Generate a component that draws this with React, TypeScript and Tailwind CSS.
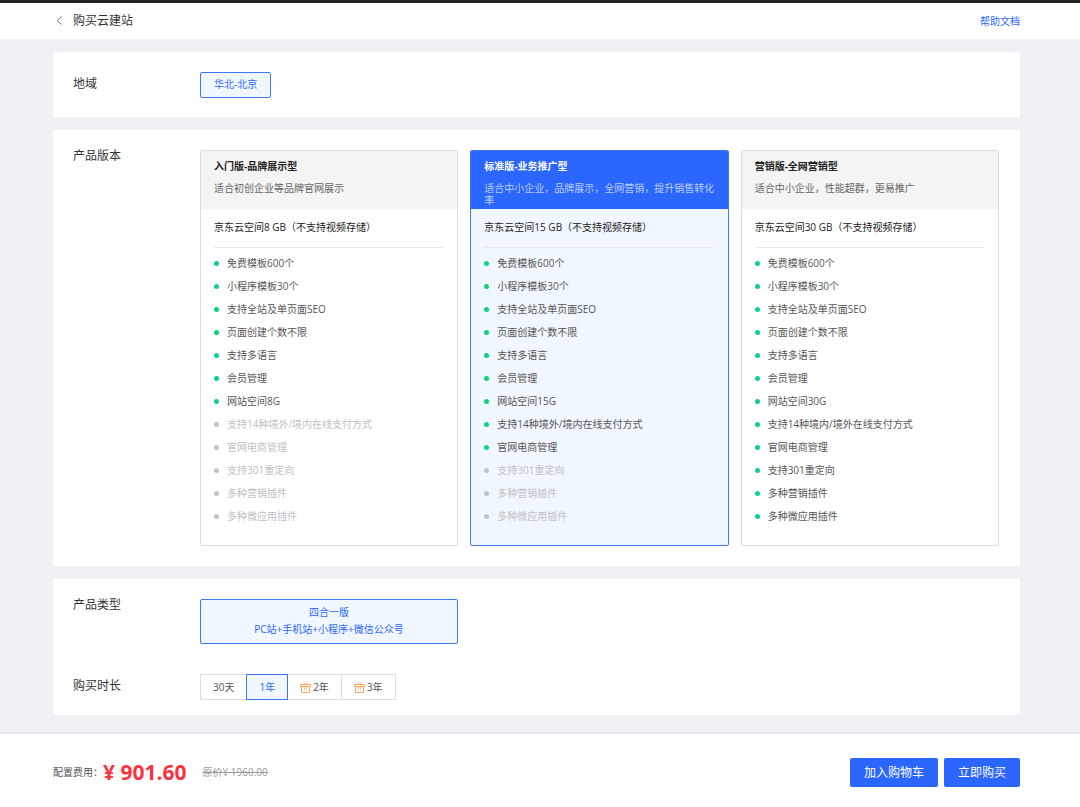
import { useState } from 'react';
import clsx from 'clsx';

const features = [
  '免费模板600个',
  '小程序模板30个',
  '支持全站及单页面SEO',
  '页面创建个数不限',
  '支持多语言',
  '会员管理',
];

const plans = [
  {
    id: 'starter',
    name: '入门版-品牌展示型',
    desc: '适合初创企业等品牌官网展示',
    space: '京东云空间8 GB（不支持视频存储）',
    items: [...features, '网站空间8G', '支持14种境外/境内在线支付方式', '官网电商管理', '支持301重定向', '多种营销插件', '多种微应用插件'],
    enabled: 7,
  },
  {
    id: 'standard',
    name: '标准版-业务推广型',
    desc: '适合中小企业，品牌展示，全网营销，提升销售转化率',
    space: '京东云空间15 GB（不支持视频存储）',
    items: [...features, '网站空间15G', '支持14种境外/境内在线支付方式', '官网电商管理', '支持301重定向', '多种营销插件', '多种微应用插件'],
    enabled: 9,
  },
  {
    id: 'marketing',
    name: '营销版-全网营销型',
    desc: '适合中小企业，性能超群，更易推广',
    space: '京东云空间30 GB（不支持视频存储）',
    items: [...features, '网站空间30G', '支持14种境内/境外在线支付方式', '官网电商管理', '支持301重定向', '多种营销插件', '多种微应用插件'],
    enabled: 12,
  },
];

const durations = [
  { label: '30天', gift: false },
  { label: '1年', gift: false },
  { label: '2年', gift: true },
  { label: '3年', gift: true },
];

function GiftIcon() {
  return (
    <svg width="11" height="11" viewBox="0 0 11 11" fill="none" stroke="#ffa45c" strokeWidth="1" aria-hidden="true">
      <path d="M0.5 2.5h10v2h-10z" />
      <path d="M1.5 4.5v6h8v-6" />
      <path d="M4.5 4.5v4M6.5 4.5v4" strokeOpacity="0.6" />
      <path d="M5.5 2.5 3.5 0.8M5.5 2.5 7.5 0.8" />
    </svg>
  );
}

function Plan({ plan, selected, onSelect }: any) {
  return (
    <label
      className={clsx(
        'relative flex flex-col border rounded-xs cursor-pointer overflow-hidden pb-[17px]',
        selected ? 'border-[#3f76fb] bg-[#f0f7ff]' : 'border-[#dcdddf] bg-white'
      )}
    >
      <input type="radio" name="plan" className="sr-only" checked={selected} onChange={onSelect} />
      <div className={clsx('h-[58px] px-[13px] pt-[7px]', selected ? 'bg-[#2b66ff]' : 'bg-[#f4f4f4]')}>
        <h3 className={clsx('font-bold leading-4', selected ? 'text-white' : 'text-[#222]')}>{plan.name}</h3>
        <p className={clsx('mt-2 leading-3', selected ? 'text-[#b9ceff]' : 'text-[#666]')}>{plan.desc}</p>
      </div>
      <div className="px-[13px]">
        <p className="h-[39px] pt-[10px] leading-4 text-[#222] border-b border-[#e8eaef]">{plan.space}</p>
        <ul className="pt-1">
          {plan.items.map((item: string, i: number) => (
            <li
              key={item}
              className={clsx('flex items-center gap-2 leading-[23px]', i < plan.enabled ? 'text-[#555]' : 'text-[#bfc0c4]')}
            >
              <span
                className={clsx('size-[5px] rounded-full shrink-0', i < plan.enabled ? 'bg-[#0dd47c]' : 'bg-[#bfc3cc]')}
              ></span>
              {item}
            </li>
          ))}
        </ul>
      </div>
    </label>
  );
}

export default function App() {
  const [plan, setPlan] = useState('standard');
  const [duration, setDuration] = useState('1年');

  return (
    <div className="min-h-screen flex flex-col bg-[#eff1f5] text-[10px] text-[#555] font-['Open_Sans','Noto_Sans_CJK_SC',sans-serif]">
      <header className="flex items-center justify-between h-[39px] pl-[53px] pr-[60px] bg-white border-t-3 border-[#222]">
        <div className="flex items-center gap-2">
          <button aria-label="返回" className="flex">
            <svg width="12" height="12" viewBox="0 0 12 12" fill="none" stroke="#777" aria-hidden="true">
              <path d="M8.5 1.5 4 5.5 8.5 9.5" />
            </svg>
          </button>
          <h1 className="text-xs text-[#333]">购买云建站</h1>
        </div>
        <a href="#" className="text-[#2b66ff]">帮助文档</a>
      </header>

      <main className="flex-1 flex flex-col gap-[13px] pl-[53px] pr-[60px] pt-[13px] pb-[17px]">
        <section className="flex items-start bg-white pl-5 pr-[21px] pt-5 pb-[19px]">
          <h2 className="w-[127px] shrink-0 text-xs leading-6 text-[#333]">地域</h2>
          <button aria-pressed="true" className="h-[26px] px-[13px] pb-px border border-[#3f76fb] rounded-xs bg-[#f0f7ff] text-[#2b66ff]">
            华北-北京
          </button>
        </section>

        <section className="flex items-start bg-white pl-5 pr-[21px] py-5">
          <h2 className="w-[127px] shrink-0 text-xs leading-3 text-[#333]">产品版本</h2>
          <div role="radiogroup" aria-label="产品版本" className="flex-1 grid grid-cols-3 gap-3">
            {plans.map((p) => (
              <Plan key={p.id} plan={p} selected={plan === p.id} onSelect={() => setPlan(p.id)} />
            ))}
          </div>
        </section>

        <section className="flex flex-col gap-[30px] bg-white pl-5 pr-[21px] pt-5 pb-[15px]">
          <div className="flex items-start">
            <h2 className="w-[127px] shrink-0 text-xs leading-3 text-[#333]">产品类型</h2>
            <button aria-pressed="true" className="w-[258px] h-[45px] pb-[2px] border border-[#3f76fb] rounded-xs bg-[#f0f7ff] text-[#2b66ff] leading-[17px]">
              四合一版
              <br />
              PC站+手机站+小程序+微信公众号
            </button>
          </div>
          <div className="flex items-start">
            <h2 className="w-[127px] shrink-0 text-xs leading-6 text-[#333]">购买时长</h2>
            <div className="flex">
              {durations.map((d, i) => (
                <button
                  key={d.label}
                  aria-pressed={duration === d.label}
                  onClick={() => setDuration(d.label)}
                  className={clsx(
                    'flex items-center gap-[2px] h-[26px] px-3 border',
                    i > 0 && '-ml-px',
                    duration === d.label
                      ? 'relative border-[#3f76fb] bg-[#f0f7ff] text-[#2b66ff]'
                      : 'border-[#dcdddf] bg-white'
                  )}
                >
                  {d.gift && <GiftIcon />}
                  {d.label}
                </button>
              ))}
            </div>
          </div>
        </section>
      </main>

      <footer className="flex items-center justify-between h-[75px] pl-[53px] pr-[60px] pt-1 bg-white border-t-2 border-[#e5e7ea]">
        <div className="flex items-center">
          <span>配置费用：</span>
          <strong className="text-[21px] text-[#f9323f]">¥ 901.60</strong>
          <del className="ml-4 text-[#999]">原价¥ 1960.00</del>
        </div>
        <div className="flex gap-[6px]">
          <button className="h-[29px] px-[14px] rounded-xs bg-[#2b66ff] text-xs text-white">加入购物车</button>
          <button className="h-[29px] px-[14px] rounded-xs bg-[#2b66ff] text-xs text-white">立即购买</button>
        </div>
      </footer>
    </div>
  );
}
